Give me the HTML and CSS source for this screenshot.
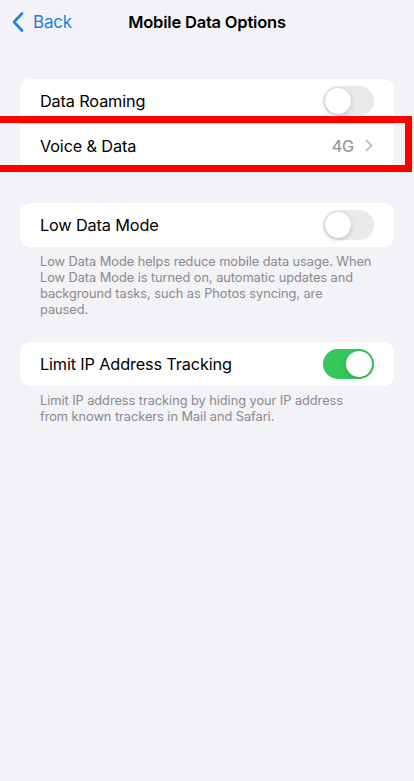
FILE: index.html
```html
<!DOCTYPE html>
<html lang="en">
<head>
<meta charset="utf-8">
<meta name="viewport" content="width=device-width, initial-scale=1">
<title>Mobile Data Options</title>
<link rel="stylesheet" href="styles.css">
</head>
<body>
<div class="screen">
  <header class="nav">
    <a class="back" href="#">
      <svg class="back-chev" width="12" height="20" viewBox="0 0 12 20" aria-hidden="true">
        <path d="M10 1.5 L2 10 L10 18.5" fill="none" stroke="#1a82e2" stroke-width="2.6" stroke-linecap="round" stroke-linejoin="round"/>
      </svg>
      <span>Back</span>
    </a>
    <h1 class="title">Mobile Data Options</h1>
  </header>

  <section class="group group-first">
    <div class="card">
      <div class="row">
        <span class="label">Data Roaming</span>
        <span class="switch"><span class="knob"></span></span>
      </div>
      <div class="row row-divided">
        <span class="label">Voice &amp; Data</span>
        <span class="detail">4G
          <svg class="chev" width="8" height="13" viewBox="0 0 8 13" aria-hidden="true">
            <path d="M1.5 1.5 L6.5 6.5 L1.5 11.5" fill="none" stroke="#c4c4c7" stroke-width="2" stroke-linecap="round" stroke-linejoin="round"/>
          </svg>
        </span>
      </div>
    </div>
  </section>

  <section class="group">
    <div class="card">
      <div class="row">
        <span class="label">Low Data Mode</span>
        <span class="switch"><span class="knob"></span></span>
      </div>
    </div>
    <p class="footer">Low Data Mode helps reduce mobile data usage. When Low Data Mode is turned on, automatic updates and background tasks, such as Photos syncing, are paused.</p>
  </section>

  <section class="group group-last">
    <div class="card">
      <div class="row">
        <span class="label">Limit IP Address Tracking</span>
        <span class="switch on"><span class="knob"></span></span>
      </div>
    </div>
    <p class="footer">Limit IP address tracking by hiding your IP address from known trackers in Mail and Safari.</p>
  </section>

  <div class="highlight" aria-hidden="true"></div>
</div>
</body>
</html>
```

FILE: styles.css
```css
* { box-sizing: border-box; }

html, body {
  margin: 0;
  padding: 0;
  background: #f2f2f7;
}

body {
  font-family: Inter, "Noto Sans", "Liberation Sans", sans-serif;
  color: #000;
  -webkit-font-smoothing: antialiased;
}

.screen {
  position: relative;
  width: 414px;
  min-height: 781px;
  overflow: hidden;
}

.nav {
  position: relative;
  height: 44px;
  display: flex;
  align-items: center;
  justify-content: center;
}

.back {
  position: absolute;
  left: 12px;
  top: 0;
  height: 44px;
  display: flex;
  align-items: center;
  gap: 9px;
  color: #1a82e2;
  text-decoration: none;
  font-size: 17px;
  letter-spacing: -0.2px;
}

.back-chev { display: block; }

.title {
  margin: 0;
  font-size: 16.5px;
  font-weight: 600;
  letter-spacing: -0.2px;
}

.group {
  margin: 0 20px;
}

.group-first { margin-top: 35px; }
.group + .group { margin-top: 36px; }
.group-last { margin-top: 24px !important; }

.card {
  background: #fff;
  border-radius: 10px;
  overflow: hidden;
}

.row {
  height: 44px;
  display: flex;
  align-items: center;
  justify-content: space-between;
  padding: 0 20px 0 20px;
  font-size: 16.3px;
  letter-spacing: -0.15px;
}

.row-divided {
  border-top: 0.5px solid #dcdce0;
}

.detail {
  display: flex;
  align-items: center;
  gap: 11px;
  color: #8e8e93;
  padding-right: 1px;
}

.chev { display: block; }

.switch {
  position: relative;
  width: 51px;
  height: 30px;
  border-radius: 15px;
  background: #e9e9eb;
}

.switch .knob {
  position: absolute;
  top: 2px;
  left: 2px;
  width: 26px;
  height: 26px;
  border-radius: 50%;
  background: #fff;
  box-shadow: 0 2px 5px rgba(0, 0, 0, 0.15), 0 0 1px rgba(0, 0, 0, 0.15);
}

.switch.on { background: #34c759; }
.switch.on .knob { left: 23px; }

.footer {
  margin: 7px 0 0;
  padding: 0 20px;
  font-size: 12.8px;
  line-height: 16px;
  color: #8a8a8e;
  letter-spacing: -0.05px;
}

.highlight {
  position: absolute;
  left: -10px;
  top: 116px;
  width: 422px;
  height: 56px;
  border: 7px solid #ff0000;
  pointer-events: none;
}
```
